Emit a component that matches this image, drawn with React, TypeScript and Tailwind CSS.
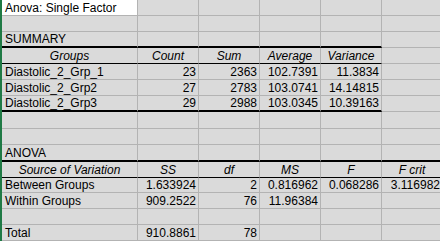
type Align = "left" | "center" | "right";
type Cell = { text?: string; align?: Align; italic?: boolean };
type Line = "gray" | "thin" | "thick";
type Row = { h: number; cells: Cell[]; line?: Line; span?: number; white?: boolean };

const widths = [136, 61, 61, 61, 61, 61];

const hdr = (t: string): Cell => ({ text: t, align: "center", italic: true });
const num = (t: string): Cell => ({ text: t, align: "right" });
const txt = (t: string): Cell => ({ text: t, align: "left" });

const rows: Row[] = [
  { h: 16, cells: [txt("Anova: Single Factor")], white: true },
  { h: 16, cells: [] },
  { h: 16, cells: [txt("SUMMARY")], line: "thick", span: 5 },
  { h: 17, cells: [hdr("Groups"), hdr("Count"), hdr("Sum"), hdr("Average"), hdr("Variance")], line: "thin", span: 5 },
  { h: 16, cells: [txt("Diastolic_2_Grp_1"), num("23"), num("2363"), num("102.7391"), num("11.3834")] },
  { h: 16, cells: [txt("Diastolic_2_Grp2"), num("27"), num("2783"), num("103.0741"), num("14.14815")] },
  { h: 16, cells: [txt("Diastolic_2_Grp3"), num("29"), num("2988"), num("103.0345"), num("10.39163")], line: "thick", span: 5 },
  { h: 17, cells: [] },
  { h: 16, cells: [] },
  { h: 17, cells: [txt("ANOVA")], line: "thick", span: 6 },
  { h: 16, cells: [hdr("Source of Variation"), hdr("SS"), hdr("df"), hdr("MS"), hdr("F"), hdr("F crit")], line: "thin", span: 6 },
  { h: 16, cells: [txt("Between Groups"), num("1.633924"), num("2"), num("0.816962"), num("0.068286"), num("3.116982")] },
  { h: 16, cells: [txt("Within Groups"), num("909.2522"), num("76"), num("11.96384")] },
  { h: 16, cells: [] },
  { h: 16, cells: [txt("Total"), num("910.8861"), num("78")] },
];

function SheetRow({ row }: { row: Row }) {
  return (
    <div className="flex" style={{ height: row.h }}>
      {widths.map((w, i) => {
        const c = row.cells[i] ?? {};
        const inTable = row.line && i < (row.span ?? 0);
        const bottom =
          inTable && row.line === "thick"
            ? "border-b-2 border-b-black"
            : inTable && row.line === "thin"
            ? "border-b border-b-black"
            : "border-b border-b-[#b3b3b3]";
        const bg = row.white && i === 0 ? "bg-white" : "bg-[#dadada]";
        const align =
          c.align === "right"
            ? "justify-end pr-[2px]"
            : c.align === "center"
            ? "justify-center"
            : "justify-start pl-[3px]";
        return (
          <div
            key={i}
            className={`box-border flex shrink-0 items-end whitespace-nowrap border-r border-r-[#b3b3b3] ${bottom} ${bg} ${align} ${c.italic ? "italic" : ""}`}
            style={{ width: w }}
          >
            <span className="leading-[13px]">{c.text}</span>
          </div>
        );
      })}
    </div>
  );
}

export default function App() {
  return (
    <main
      className="flex h-[241px] w-[440px] overflow-hidden bg-[#dadada] text-[12px] text-black"
      style={{ fontFamily: '"Liberation Sans", Arial, sans-serif' }}
    >
      <div className="w-[2px] shrink-0 bg-[#1f7a45]" />
      <div className="flex flex-col">
        {rows.map((r, i) => (
          <SheetRow key={i} row={r} />
        ))}
      </div>
    </main>
  );
}
